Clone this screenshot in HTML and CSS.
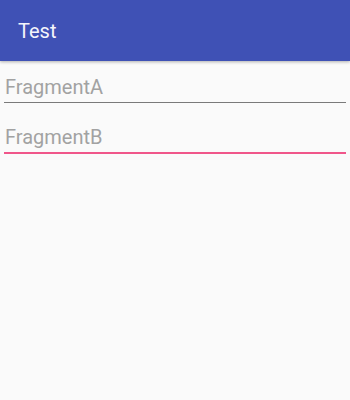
FILE: index.html
```html
<!DOCTYPE html>
<html lang="en">
<head>
    <meta charset="UTF-8">
    <meta name="viewport" content="width=device-width, initial-scale=1.0">
    <title>Test</title>
    <link rel="stylesheet" href="styles.css">
</head>
<body>
    <div class="toolbar">
        <span class="title">Test</span>
    </div>

    <div class="content">
        <div class="field">FragmentA</div>
        <div class="field focused">FragmentB</div>
    </div>
</body>
</html>
```
FILE: styles.css
```css
body {
    font-family: Roboto, "Noto Sans", sans-serif;
    margin: 0;
    padding: 0;
    background-color: #fafafa;
    height: 400px;
}
.toolbar {
    height: 61px;
    background-color: #3f51b5;
    display: flex;
    align-items: center;
    padding-left: 18px;
    box-shadow: 0 1px 3px rgba(0, 0, 0, 0.3);
}
.title {
    color: #f4f5fb;
    font-size: 20px;
    font-weight: 400;
    line-height: 24px;
}
.content {
    padding: 0 4px;
}
.field {
    margin-top: 23px;
    font-size: 20px;
    line-height: 23px;
    color: #a2a2a2;
    padding: 0 0 3px 1px;
    border-bottom: 1px solid #7a7a7a;
}
.field:first-child {
    margin-top: 15px;
}
.field.focused {
    border-bottom: 2px solid #f0568a;
}
```
